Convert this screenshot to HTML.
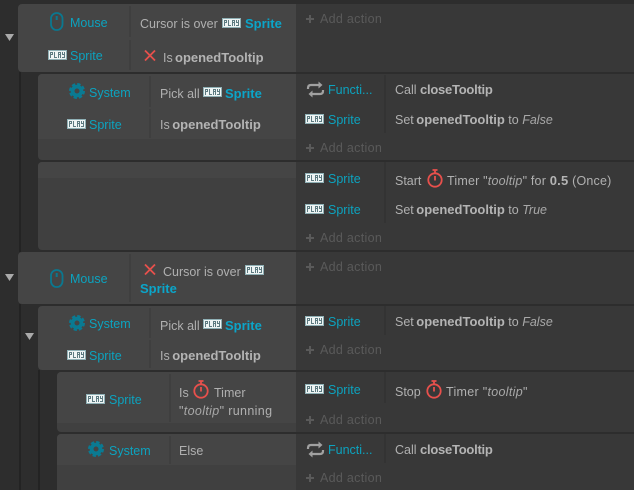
<!DOCTYPE html>
<html><head><meta charset="utf-8">
<style>
html,body{margin:0;padding:0;width:634px;height:490px;overflow:hidden;background:#2d2d2d}
body{position:relative;font-family:"Liberation Sans",sans-serif;font-size:12.5px;color:#b0b0b0}
.b{position:absolute}
.t{position:absolute;line-height:16px;white-space:nowrap;margin-top:1px}
.c{color:#0ca3bf}
b{font-size:13px;font-weight:bold;color:#b4b4b4}
b.s{color:#0ba5c9}
b.k{letter-spacing:-.25px}
b.m{margin-left:-1px}
i{font-style:italic;color:#a8a8a8}
.a{position:absolute;line-height:16px;white-space:nowrap;color:#5a5a5a;margin-top:1px;letter-spacing:.3px}
.a:before{content:"";position:absolute;left:-14px;top:7px;width:8px;height:2px;background:#5a5a5a}
.a:after{content:"";position:absolute;left:-11px;top:4px;width:2px;height:8px;background:#5a5a5a}
.p{position:absolute;width:19px;height:10px;background:#eef4f4;box-shadow:inset 0 0 0 1px #8fb0b5}
.p:before{content:"";position:absolute;left:0;top:0;width:1px;height:1px;color:#5c7a80;box-shadow:
2px 2px,2px 3px,2px 4px,2px 5px,2px 6px,2px 7px,3px 2px,4px 2px,4px 3px,4px 4px,3px 4px,
6px 2px,6px 3px,6px 4px,6px 5px,6px 6px,6px 7px,7px 7px,8px 7px,
10px 2px,10px 3px,10px 4px,10px 5px,10px 6px,10px 7px,11px 2px,12px 2px,12px 3px,12px 4px,12px 5px,12px 6px,12px 7px,11px 4px,
14px 2px,14px 3px,14px 4px,15px 4px,16px 2px,16px 3px,16px 4px,16px 5px,16px 6px,16px 7px,15px 7px,14px 7px}
svg{position:absolute;overflow:visible}
</style></head><body>

<!-- tree lines -->
<div class="b" style="left:19px;top:72px;width:2px;height:180px;background:#232323"></div>
<div class="b" style="left:19px;top:304px;width:2px;height:186px;background:#232323"></div>
<div class="b" style="left:38px;top:370px;width:2px;height:120px;background:#232323"></div>

<!-- actions backgrounds -->
<div class="b" style="left:296px;top:4px;width:338px;height:68px;background:#383838"></div>
<div class="b" style="left:296px;top:74px;width:338px;height:86px;background:#383838"></div>
<div class="b" style="left:296px;top:162px;width:338px;height:88px;background:#383838"></div>
<div class="b" style="left:296px;top:252px;width:338px;height:52px;background:#383838"></div>
<div class="b" style="left:296px;top:306px;width:338px;height:64px;background:#383838"></div>
<div class="b" style="left:296px;top:372px;width:338px;height:60px;background:#383838"></div>
<div class="b" style="left:296px;top:434px;width:338px;height:56px;background:#383838"></div>

<!-- condition backgrounds -->
<div class="b" style="left:18px;top:4px;width:278px;height:68px;background:#454545;border-radius:4px 0 0 4px"></div>
<div class="b" style="left:38px;top:74px;width:258px;height:86px;background:#404040;border-radius:4px 0 0 4px"></div>
<div class="b" style="left:38px;top:74px;width:258px;height:65px;background:#454545;border-radius:4px 0 0 0"></div>
<div class="b" style="left:38px;top:162px;width:258px;height:88px;background:#404040;border-radius:4px 0 0 4px"></div>
<div class="b" style="left:38px;top:162px;width:258px;height:16px;background:#454545;border-radius:4px 0 0 0"></div>
<div class="b" style="left:18px;top:252px;width:278px;height:52px;background:#454545;border-radius:4px 0 0 4px"></div>
<div class="b" style="left:38px;top:306px;width:258px;height:64px;background:#454545;border-radius:4px 0 0 4px"></div>
<div class="b" style="left:57px;top:372px;width:239px;height:60px;background:#404040;border-radius:4px 0 0 4px"></div>
<div class="b" style="left:57px;top:372px;width:239px;height:51px;background:#454545;border-radius:4px 0 0 0"></div>
<div class="b" style="left:57px;top:434px;width:239px;height:56px;background:#404040;border-radius:4px 0 0 0"></div>
<div class="b" style="left:57px;top:434px;width:239px;height:31px;background:#454545;border-radius:4px 0 0 0"></div>

<!-- separators -->
<div class="b" style="left:129px;top:6px;width:2px;height:31px;background:#3f3f3f"></div>
<div class="b" style="left:129px;top:40px;width:2px;height:30px;background:#3f3f3f"></div>
<div class="b" style="left:149px;top:76px;width:2px;height:31px;background:#3f3f3f"></div>
<div class="b" style="left:149px;top:109px;width:2px;height:29px;background:#3f3f3f"></div>
<div class="b" style="left:129px;top:254px;width:2px;height:48px;background:#3f3f3f"></div>
<div class="b" style="left:149px;top:308px;width:2px;height:30px;background:#3f3f3f"></div>
<div class="b" style="left:149px;top:340px;width:2px;height:28px;background:#3f3f3f"></div>
<div class="b" style="left:169px;top:374px;width:2px;height:48px;background:#3f3f3f"></div>
<div class="b" style="left:169px;top:436px;width:2px;height:28px;background:#3f3f3f"></div>
<div class="b" style="left:384px;top:75px;width:2px;height:58px;background:#333"></div>
<div class="b" style="left:384px;top:162px;width:2px;height:61px;background:#333"></div>
<div class="b" style="left:384px;top:306px;width:2px;height:29px;background:#333"></div>
<div class="b" style="left:384px;top:372px;width:2px;height:31px;background:#333"></div>
<div class="b" style="left:384px;top:434px;width:2px;height:29px;background:#333"></div>

<!-- arrows -->
<svg style="left:5px;top:34px" width="9" height="7"><path d="M0 0H9L4.500 7Z" fill="#aaaaaa"/></svg>
<svg style="left:5px;top:274px" width="9" height="7"><path d="M0 0H9L4.500 7Z" fill="#aaaaaa"/></svg>
<svg style="left:25px;top:333px" width="9" height="7"><path d="M0 0H9L4.500 7Z" fill="#aaaaaa"/></svg>

<!-- Event 1 -->
<svg style="left:50px;top:12px" width="14" height="19"><rect x="1" y="1" width="11.500" height="17" rx="5.700" fill="none" stroke="#0a7890" stroke-width="1.800"/><rect x="5.700" y="4" width="2" height="4" fill="#0a7890"/></svg>
<div class="t c" style="left:70px;top:14px">Mouse</div>
<div class="p" style="left:48px;top:50px"></div>
<div class="t c" style="left:70px;top:47px">Sprite</div>
<div class="t" style="left:140px;top:15px">Cursor is over</div>
<div class="p" style="left:222px;top:18px"></div>
<div class="t" style="left:245px;top:15px"><b class="s">Sprite</b></div>
<svg style="left:144px;top:50px" width="12" height="11"><path d="M1 0.500L11 10.500M11 0.500L1 10.500" stroke="#e8504c" stroke-width="1.800" fill="none"/></svg>
<div class="t" style="left:163px;top:49px">Is</div>
<div class="t" style="left:175px;top:49px"><b>openedTooltip</b></div>
<div class="a" style="left:320px;top:10px">Add action</div>

<!-- Sub 1 -->
<svg style="left:69px;top:83px" width="16" height="16"><circle cx="8" cy="8" r="4.400" fill="none" stroke="#0a7a92" stroke-width="3.800"/><circle cx="8" cy="8" r="6.900" fill="none" stroke="#0a7a92" stroke-width="2.200" stroke-dasharray="3.400 2.020"/></svg>
<div class="t c" style="left:89px;top:84px">System</div>
<div class="p" style="left:67px;top:119px"></div>
<div class="t c" style="left:89px;top:116px">Sprite</div>
<div class="t" style="left:160px;top:85px">Pick all</div>
<div class="p" style="left:203px;top:87px"></div>
<div class="t" style="left:225px;top:85px"><b class="s">Sprite</b></div>
<div class="t" style="left:160px;top:116px">Is <b class="m">openedTooltip</b></div>

<svg style="left:307px;top:81px" width="17" height="17" fill="none" stroke="#a0a0a0" stroke-width="2.200"><path d="M1 8V7Q1 4 4 4H13"/><path d="M16 9V10Q16 13 13 13H4"/><path d="M11.500 0.500L15.500 4L11.500 7.500Z" fill="#a0a0a0" stroke="none"/><path d="M5.500 9.500L1.500 13L5.500 16.500Z" fill="#a0a0a0" stroke="none"/></svg>
<div class="t c" style="left:328px;top:81px">Functi...</div>
<div class="t" style="left:395px;top:81px">Call <b class="k">closeTooltip</b></div>
<div class="p" style="left:305px;top:114px"></div>
<div class="t c" style="left:328px;top:111px">Sprite</div>
<div class="t" style="left:395px;top:111px">Set <b class="m">openedTooltip</b> to <i>False</i></div>
<div class="a" style="left:320px;top:139px">Add action</div>

<!-- Sub 2 -->
<div class="p" style="left:305px;top:173px"></div>
<div class="t c" style="left:328px;top:170px">Sprite</div>
<div class="t" style="left:395px;top:172px">Start</div>
<svg style="left:427px;top:169px" width="16" height="19" fill="none" stroke="#e8504c" stroke-width="1.800"><circle cx="8" cy="11" r="6.700"/><path d="M8 7V11.500M5.500 1H10.500M8 1V4"/></svg>
<div class="t" style="left:447px;top:172px;letter-spacing:.2px">Timer "<i>tooltip</i>" for <b>0.5</b> (Once)</div>
<div class="p" style="left:305px;top:204px"></div>
<div class="t c" style="left:328px;top:201px">Sprite</div>
<div class="t" style="left:395px;top:201px">Set <b class="m">openedTooltip</b> to <i>True</i></div>
<div class="a" style="left:320px;top:229px">Add action</div>

<!-- Event 2 -->
<svg style="left:50px;top:269px" width="14" height="19"><rect x="1" y="1" width="11.500" height="17" rx="5.700" fill="none" stroke="#0a7890" stroke-width="1.800"/><rect x="5.700" y="4" width="2" height="4" fill="#0a7890"/></svg>
<div class="t c" style="left:70px;top:270px">Mouse</div>
<svg style="left:144px;top:264px" width="12" height="11"><path d="M1 0.500L11 10.500M11 0.500L1 10.500" stroke="#e8504c" stroke-width="1.800" fill="none"/></svg>
<div class="t" style="left:163px;top:263px">Cursor is over</div>
<div class="p" style="left:245px;top:265px"></div>
<div class="t" style="left:140px;top:280px"><b class="s">Sprite</b></div>
<div class="a" style="left:320px;top:258px">Add action</div>

<!-- Sub 3 -->
<svg style="left:69px;top:315px" width="16" height="16"><circle cx="8" cy="8" r="4.400" fill="none" stroke="#0a7a92" stroke-width="3.800"/><circle cx="8" cy="8" r="6.900" fill="none" stroke="#0a7a92" stroke-width="2.200" stroke-dasharray="3.400 2.020"/></svg>
<div class="t c" style="left:89px;top:315px">System</div>
<div class="p" style="left:67px;top:350px"></div>
<div class="t c" style="left:89px;top:347px">Sprite</div>
<div class="t" style="left:160px;top:317px">Pick all</div>
<div class="p" style="left:203px;top:319px"></div>
<div class="t" style="left:225px;top:317px"><b class="s">Sprite</b></div>
<div class="t" style="left:160px;top:347px">Is <b class="m">openedTooltip</b></div>
<div class="p" style="left:305px;top:316px"></div>
<div class="t c" style="left:328px;top:313px">Sprite</div>
<div class="t" style="left:395px;top:313px">Set <b class="m">openedTooltip</b> to <i>False</i></div>
<div class="a" style="left:320px;top:341px">Add action</div>

<!-- Sub-sub 1 -->
<div class="p" style="left:86px;top:394px"></div>
<div class="t c" style="left:109px;top:391px">Sprite</div>
<div class="t" style="left:179px;top:384px">Is</div>
<svg style="left:193px;top:380px" width="16" height="19" fill="none" stroke="#e8504c" stroke-width="1.800"><circle cx="8" cy="11" r="6.700"/><path d="M8 7V11.500M5.500 1H10.500M8 1V4"/></svg>
<div class="t" style="left:214px;top:384px">Timer</div>
<div class="t" style="left:179px;top:402px;letter-spacing:.35px">"<i>tooltip</i>" running</div>
<div class="p" style="left:305px;top:384px"></div>
<div class="t c" style="left:328px;top:381px">Sprite</div>
<div class="t" style="left:395px;top:383px">Stop</div>
<svg style="left:426px;top:380px" width="16" height="19" fill="none" stroke="#e8504c" stroke-width="1.800"><circle cx="8" cy="11" r="6.700"/><path d="M8 7V11.500M5.500 1H10.500M8 1V4"/></svg>
<div class="t" style="left:446px;top:383px;letter-spacing:.3px">Timer "<i>tooltip</i>"</div>
<div class="a" style="left:320px;top:411px">Add action</div>

<!-- Else -->
<svg style="left:88px;top:441px" width="16" height="16"><circle cx="8" cy="8" r="4.400" fill="none" stroke="#0a7a92" stroke-width="3.800"/><circle cx="8" cy="8" r="6.900" fill="none" stroke="#0a7a92" stroke-width="2.200" stroke-dasharray="3.400 2.020"/></svg>
<div class="t c" style="left:109px;top:442px">System</div>
<div class="t" style="left:179px;top:442px">Else</div>
<svg style="left:307px;top:441px" width="17" height="17" fill="none" stroke="#a0a0a0" stroke-width="2.200"><path d="M1 8V7Q1 4 4 4H13"/><path d="M16 9V10Q16 13 13 13H4"/><path d="M11.500 0.500L15.500 4L11.500 7.500Z" fill="#a0a0a0" stroke="none"/><path d="M5.500 9.500L1.500 13L5.500 16.500Z" fill="#a0a0a0" stroke="none"/></svg>
<div class="t c" style="left:328px;top:441px">Functi...</div>
<div class="t" style="left:395px;top:441px">Call <b class="k">closeTooltip</b></div>
<div class="a" style="left:320px;top:469px">Add action</div>

</body></html>
